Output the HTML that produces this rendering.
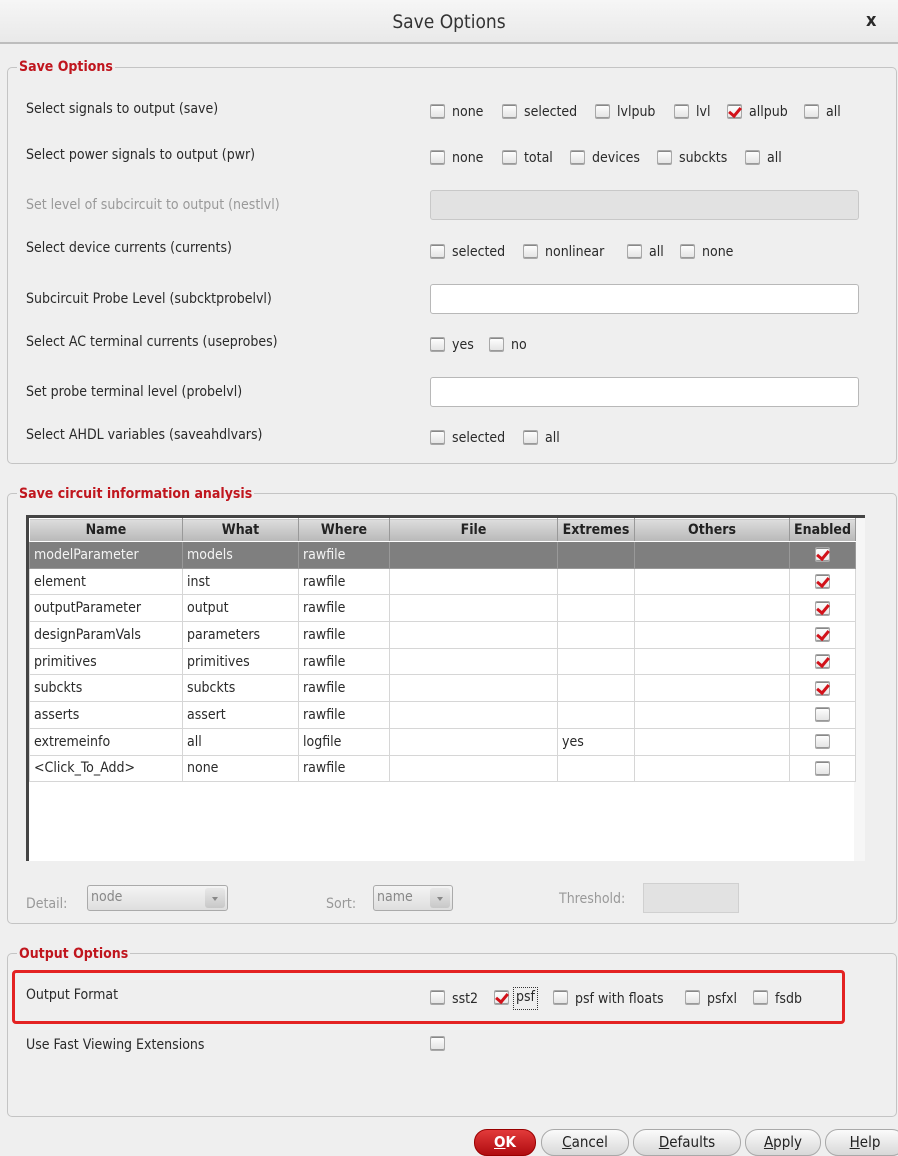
<!DOCTYPE html>
<html><head><meta charset="utf-8">
<style>
*{box-sizing:border-box;margin:0;padding:0}
body{width:898px;height:1156px;background:#efefef;position:relative;overflow:hidden;font-family:"DejaVu Sans Condensed","Liberation Sans Narrow","Liberation Sans",sans-serif;font-size:14px;color:#2a2a2a}
.a{position:absolute;white-space:nowrap;line-height:18px;margin-top:1px}
.title{position:absolute;left:0;top:0;width:898px;height:44px;background:linear-gradient(#f6f6f6,#e9e9e9);border-bottom:2px solid #bdbdbd}
.grp{position:absolute;left:7px;width:890px;border:1px solid #c4c4c4;border-radius:5px}
.lg{position:absolute;left:18px;font-weight:bold;color:#c0161e;background:#efefef;padding:0 2px;line-height:18px;font-size:14px;margin-top:1px}
.cb{position:absolute;width:15px;height:15px;border:1px solid #a8a8a8;border-radius:2px;background:linear-gradient(#fff,#e2e2e2);box-shadow:0 1px 0 #888 inset,0 -1px 0 #999 inset}
.cb.c{background:linear-gradient(#fff,#e8e8e8)}
.cb.c::after{content:"";position:absolute;left:3px;top:0px;width:5px;height:9px;border:solid #d2121a;border-width:0 3px 3px 0;transform:rotate(40deg)}
.inp{position:absolute;left:430px;width:429px;height:30px;border:1px solid #b8b8b8;border-radius:3px;background:#fff}
table{position:absolute;left:27px;top:516px;border-collapse:collapse;font-size:14px}
td,th{height:26.7px;border:1px solid #d6d6d6;padding:0 4px;text-align:left;font-weight:normal;white-space:nowrap}
th{height:23px;background:linear-gradient(#ddd,#b8b8b8);border:1px solid #fff;border-right:1px solid #999;font-weight:bold;text-align:center;color:#222}
tr.s td{background:#7f7f7f;color:#f4f4f4;border-color:#999}
td{background:#fff}
td.e{text-align:center}
td.e .cb{position:relative;display:inline-block;top:2px}
.btn{position:absolute;top:1129px;height:27px;border:1px solid #a9a9a9;border-radius:13px;background:linear-gradient(#fbfbfb,#d8d8d8);text-align:center;line-height:25px;font-size:15px;color:#222}
.combo{position:absolute;height:26px;border:1px solid #aaa;border-radius:3px;background:linear-gradient(#f4f4f4,#dedede);color:#888;padding-left:3px;line-height:22px}
.combo i{position:absolute;right:2px;top:2px;width:20px;height:20px;border-radius:3px;background:linear-gradient(#e8e8e8,#c8c8c8)}
.combo i::after{content:"";position:absolute;left:7px;top:9px;border:3px solid transparent;border-top:4px solid #888}
</style></head><body>
<div class="title"></div>
<div class="a" style="left:0;width:898px;text-align:center;top:8px;font-size:19px;line-height:26px;color:#333">Save Options</div>
<div class="a" style="left:866px;top:9px;font-size:18px;font-weight:bold;line-height:22px">x</div>

<div class="grp" style="top:67px;height:397px"></div>
<div class="lg" style="top:57px;left:17px">Save Options</div>
<div class="a" style="left:26px;top:99px">Select signals to output (save)</div>
<div class="a" style="left:26px;top:145px">Select power signals to output (pwr)</div>
<div class="a" style="left:26px;top:195px;color:#999">Set level of subcircuit to output (nestlvl)</div>
<div class="a" style="left:26px;top:238px">Select device currents (currents)</div>
<div class="a" style="left:26px;top:289px">Subcircuit Probe Level (subcktprobelvl)</div>
<div class="a" style="left:26px;top:332px">Select AC terminal currents (useprobes)</div>
<div class="a" style="left:26px;top:382px">Set probe terminal level (probelvl)</div>
<div class="a" style="left:26px;top:425px">Select AHDL variables (saveahdlvars)</div>

<div class="cb" style="left:430px;top:104px"></div><div class="a" style="left:452px;top:102px">none</div>
<div class="cb" style="left:502px;top:104px"></div><div class="a" style="left:524px;top:102px">selected</div>
<div class="cb" style="left:595px;top:104px"></div><div class="a" style="left:617px;top:102px">lvlpub</div>
<div class="cb" style="left:674px;top:104px"></div><div class="a" style="left:696px;top:102px">lvl</div>
<div class="cb c" style="left:727px;top:104px"></div><div class="a" style="left:749px;top:102px">allpub</div>
<div class="cb" style="left:804px;top:104px"></div><div class="a" style="left:826px;top:102px">all</div>

<div class="cb" style="left:430px;top:150px"></div><div class="a" style="left:452px;top:148px">none</div>
<div class="cb" style="left:502px;top:150px"></div><div class="a" style="left:524px;top:148px">total</div>
<div class="cb" style="left:570px;top:150px"></div><div class="a" style="left:592px;top:148px">devices</div>
<div class="cb" style="left:657px;top:150px"></div><div class="a" style="left:679px;top:148px">subckts</div>
<div class="cb" style="left:745px;top:150px"></div><div class="a" style="left:767px;top:148px">all</div>

<div class="inp" style="top:190px;background:#e2e2e2;border-color:#c8c8c8"></div>

<div class="cb" style="left:430px;top:244px"></div><div class="a" style="left:452px;top:242px">selected</div>
<div class="cb" style="left:523px;top:244px"></div><div class="a" style="left:545px;top:242px">nonlinear</div>
<div class="cb" style="left:627px;top:244px"></div><div class="a" style="left:649px;top:242px">all</div>
<div class="cb" style="left:680px;top:244px"></div><div class="a" style="left:702px;top:242px">none</div>

<div class="inp" style="top:284px"></div>
<div class="cb" style="left:430px;top:337px"></div><div class="a" style="left:452px;top:335px">yes</div>
<div class="cb" style="left:489px;top:337px"></div><div class="a" style="left:511px;top:335px">no</div>
<div class="inp" style="top:377px"></div>
<div class="cb" style="left:430px;top:430px"></div><div class="a" style="left:452px;top:428px">selected</div>
<div class="cb" style="left:523px;top:430px"></div><div class="a" style="left:545px;top:428px">all</div>

<div class="grp" style="top:493px;height:431px"></div>
<div class="lg" style="top:484px;left:17px">Save circuit information analysis</div>
<div style="position:absolute;left:26px;top:515px;width:839px;height:346px;background:#fff;border-top:3px solid #444;border-left:3px solid #444"></div>
<div style="position:absolute;left:854px;top:518px;width:11px;height:343px;background:#f6f6f6"></div>
<table style="left:29px;top:518px">
<tr><th style="width:153px">Name</th><th style="width:116px">What</th><th style="width:91px">Where</th><th style="width:168px">File</th><th style="width:77px">Extremes</th><th style="width:155px">Others</th><th style="width:64px">Enabled</th></tr>
<tr class="s"><td>modelParameter</td><td>models</td><td>rawfile</td><td></td><td></td><td></td><td class="e"><span class="cb c"></span></td></tr>
<tr><td>element</td><td>inst</td><td>rawfile</td><td></td><td></td><td></td><td class="e"><span class="cb c"></span></td></tr>
<tr><td>outputParameter</td><td>output</td><td>rawfile</td><td></td><td></td><td></td><td class="e"><span class="cb c"></span></td></tr>
<tr><td>designParamVals</td><td>parameters</td><td>rawfile</td><td></td><td></td><td></td><td class="e"><span class="cb c"></span></td></tr>
<tr><td>primitives</td><td>primitives</td><td>rawfile</td><td></td><td></td><td></td><td class="e"><span class="cb c"></span></td></tr>
<tr><td>subckts</td><td>subckts</td><td>rawfile</td><td></td><td></td><td></td><td class="e"><span class="cb c"></span></td></tr>
<tr><td>asserts</td><td>assert</td><td>rawfile</td><td></td><td></td><td></td><td class="e"><span class="cb"></span></td></tr>
<tr><td>extremeinfo</td><td>all</td><td>logfile</td><td></td><td>yes</td><td></td><td class="e"><span class="cb"></span></td></tr>
<tr><td>&lt;Click_To_Add&gt;</td><td>none</td><td>rawfile</td><td></td><td></td><td></td><td class="e"><span class="cb"></span></td></tr>
</table>

<div class="a" style="left:26px;top:894px;color:#999">Detail:</div>
<div class="combo" style="left:87px;top:885px;width:141px">node<i></i></div>
<div class="a" style="left:326px;top:894px;color:#999">Sort:</div>
<div class="combo" style="left:373px;top:885px;width:80px">name<i></i></div>
<div class="a" style="left:559px;top:889px;color:#999">Threshold:</div>
<div style="position:absolute;left:643px;top:883px;width:96px;height:30px;background:#e2e2e2;border:1px solid #d0d0d0"></div>

<div class="grp" style="top:953px;height:164px"></div>
<div class="lg" style="top:944px;left:17px">Output Options</div>
<div style="position:absolute;left:12px;top:970px;width:833px;height:54px;border:3px solid #e32222;border-radius:4px"></div>
<div class="a" style="left:26px;top:985px">Output Format</div>
<div class="cb" style="left:430px;top:990px"></div><div class="a" style="left:452px;top:989px">sst2</div>
<div class="cb c" style="left:494px;top:990px"></div><div class="a" style="left:514px;top:987px;outline:1px dotted #333;padding:0 2px;height:21px;line-height:19px">psf</div>
<div class="cb" style="left:553px;top:990px"></div><div class="a" style="left:575px;top:989px">psf with floats</div>
<div class="cb" style="left:685px;top:990px"></div><div class="a" style="left:707px;top:989px">psfxl</div>
<div class="cb" style="left:753px;top:990px"></div><div class="a" style="left:775px;top:989px">fsdb</div>
<div class="a" style="left:26px;top:1035px">Use Fast Viewing Extensions</div>
<div class="cb" style="left:430px;top:1036px"></div>

<div class="btn" style="left:474px;width:62px;background:linear-gradient(#e23a3a,#b00c10);border-color:#900;color:#fff;font-weight:bold"><u>O</u>K</div>
<div class="btn" style="left:541px;width:88px"><u>C</u>ancel</div>
<div class="btn" style="left:633px;width:108px"><u>D</u>efaults</div>
<div class="btn" style="left:745px;width:76px"><u>A</u>pply</div>
<div class="btn" style="left:825px;width:80px"><u>H</u>elp</div>
</body></html>
